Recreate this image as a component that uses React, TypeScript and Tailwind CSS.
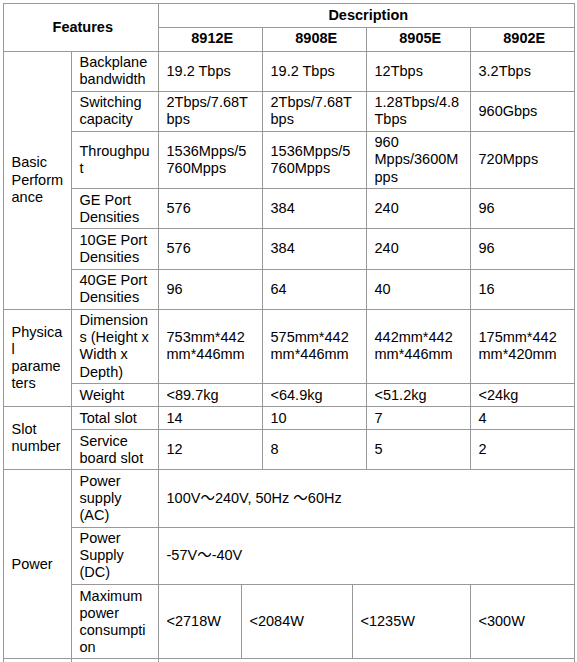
import type { ReactNode } from "react";

// column widths (8 slots so the last power row can use its own splits)
const COLS = [68, 87, 83, 21, 90, 14, 104, 104];

type Row = {
  group?: { lines: string[]; span: number };
  name: string[];
  values: string[][];
};

const ROWS: Row[] = [
  {
    group: { lines: ["Basic", "Perform", "ance"], span: 6 },
    name: ["Backplane", "bandwidth"],
    values: [["19.2 Tbps"], ["19.2 Tbps"], ["12Tbps"], ["3.2Tbps"]],
  },
  {
    name: ["Switching", "capacity"],
    values: [["2Tbps/7.68T", "bps"], ["2Tbps/7.68T", "bps"], ["1.28Tbps/4.8", "Tbps"], ["960Gbps"]],
  },
  {
    name: ["Throughpu", "t"],
    values: [
      ["1536Mpps/5", "760Mpps"],
      ["1536Mpps/5", "760Mpps"],
      ["960", "Mpps/3600M", "pps"],
      ["720Mpps"],
    ],
  },
  { name: ["GE Port", "Densities"], values: [["576"], ["384"], ["240"], ["96"]] },
  { name: ["10GE Port", "Densities"], values: [["576"], ["384"], ["240"], ["96"]] },
  { name: ["40GE Port", "Densities"], values: [["96"], ["64"], ["40"], ["16"]] },
  {
    group: { lines: ["Physica", "l", "parame", "ters"], span: 2 },
    name: ["Dimension", "s (Height x", "Width x", "Depth)"],
    values: [
      ["753mm*442", "mm*446mm"],
      ["575mm*442", "mm*446mm"],
      ["442mm*442", "mm*446mm"],
      ["175mm*442", "mm*420mm"],
    ],
  },
  { name: ["Weight"], values: [["<89.7kg"], ["<64.9kg"], ["<51.2kg"], ["<24kg"]] },
  {
    group: { lines: ["Slot", "number"], span: 2 },
    name: ["Total slot"],
    values: [["14"], ["10"], ["7"], ["4"]],
  },
  { name: ["Service", "board slot"], values: [["12"], ["8"], ["5"], ["2"]] },
];

function Lines({ lines }: { lines: string[] }) {
  return (
    <>
      {lines.map((l, i) => (
        <span key={i} className="block whitespace-nowrap">
          {l}
        </span>
      ))}
    </>
  );
}

function Td({
  children,
  colSpan,
  rowSpan,
  className = "",
}: {
  children?: ReactNode;
  colSpan?: number;
  rowSpan?: number;
  className?: string;
}) {
  return (
    <td
      colSpan={colSpan}
      rowSpan={rowSpan}
      className={`border border-[#999] pl-[7.5px] pr-[4px] py-[2.5px] align-middle ${className}`}
    >
      {children}
    </td>
  );
}

export default function App() {
  return (
    <div className="min-h-screen bg-white pl-[3px] pt-[3px] text-black">
      <table
        className="w-[571px] table-fixed border-collapse text-[14.5px] leading-[17.1px]"
        style={{ fontFamily: '"Liberation Sans", "Noto Sans CJK SC", Arial, sans-serif' }}
      >
        <colgroup>
          {COLS.map((w, i) => (
            <col key={i} style={{ width: w }} />
          ))}
        </colgroup>
        <tbody>
          <tr className="h-[23.5px]">
            <Td colSpan={2} rowSpan={2} className="text-center font-bold">
              Features
            </Td>
            <Td colSpan={6} className="text-center font-bold">
              Description
            </Td>
          </tr>
          <tr className="h-[24px]">
            <Td colSpan={2} className="text-center font-bold">8912E</Td>
            <Td colSpan={2} className="text-center font-bold">8908E</Td>
            <Td className="text-center font-bold">8905E</Td>
            <Td className="text-center font-bold">8902E</Td>
          </tr>

          {ROWS.map((r, i) => (
            <tr key={i}>
              {r.group && (
                <Td rowSpan={r.group.span}>
                  <Lines lines={r.group.lines} />
                </Td>
              )}
              <Td>
                <Lines lines={r.name} />
              </Td>
              <Td colSpan={2}>
                <Lines lines={r.values[0]} />
              </Td>
              <Td colSpan={2}>
                <Lines lines={r.values[1]} />
              </Td>
              <Td>
                <Lines lines={r.values[2]} />
              </Td>
              <Td>
                <Lines lines={r.values[3]} />
              </Td>
            </tr>
          ))}

          {/* Power */}
          <tr>
            <Td rowSpan={3}>Power</Td>
            <Td>
              <Lines lines={["Power", "supply", "(AC)"]} />
            </Td>
            <Td colSpan={6}>100V～240V, 50Hz ～60Hz</Td>
          </tr>
          <tr>
            <Td>
              <Lines lines={["Power", "Supply", "(DC)"]} />
            </Td>
            <Td colSpan={6}>-57V～-40V</Td>
          </tr>
          <tr>
            <Td>
              <Lines lines={["Maximum", "power", "consumpti", "on"]} />
            </Td>
            <Td>&lt;2718W</Td>
            <Td colSpan={2}>&lt;2084W</Td>
            <Td colSpan={2}>&lt;1235W</Td>
            <Td>&lt;300W</Td>
          </tr>

          {/* next row, cut off by the window */}
          <tr className="h-[40px]">
            <Td>&nbsp;</Td>
            <Td>&nbsp;</Td>
            <Td colSpan={6}>&nbsp;</Td>
          </tr>
        </tbody>
      </table>
    </div>
  );
}
